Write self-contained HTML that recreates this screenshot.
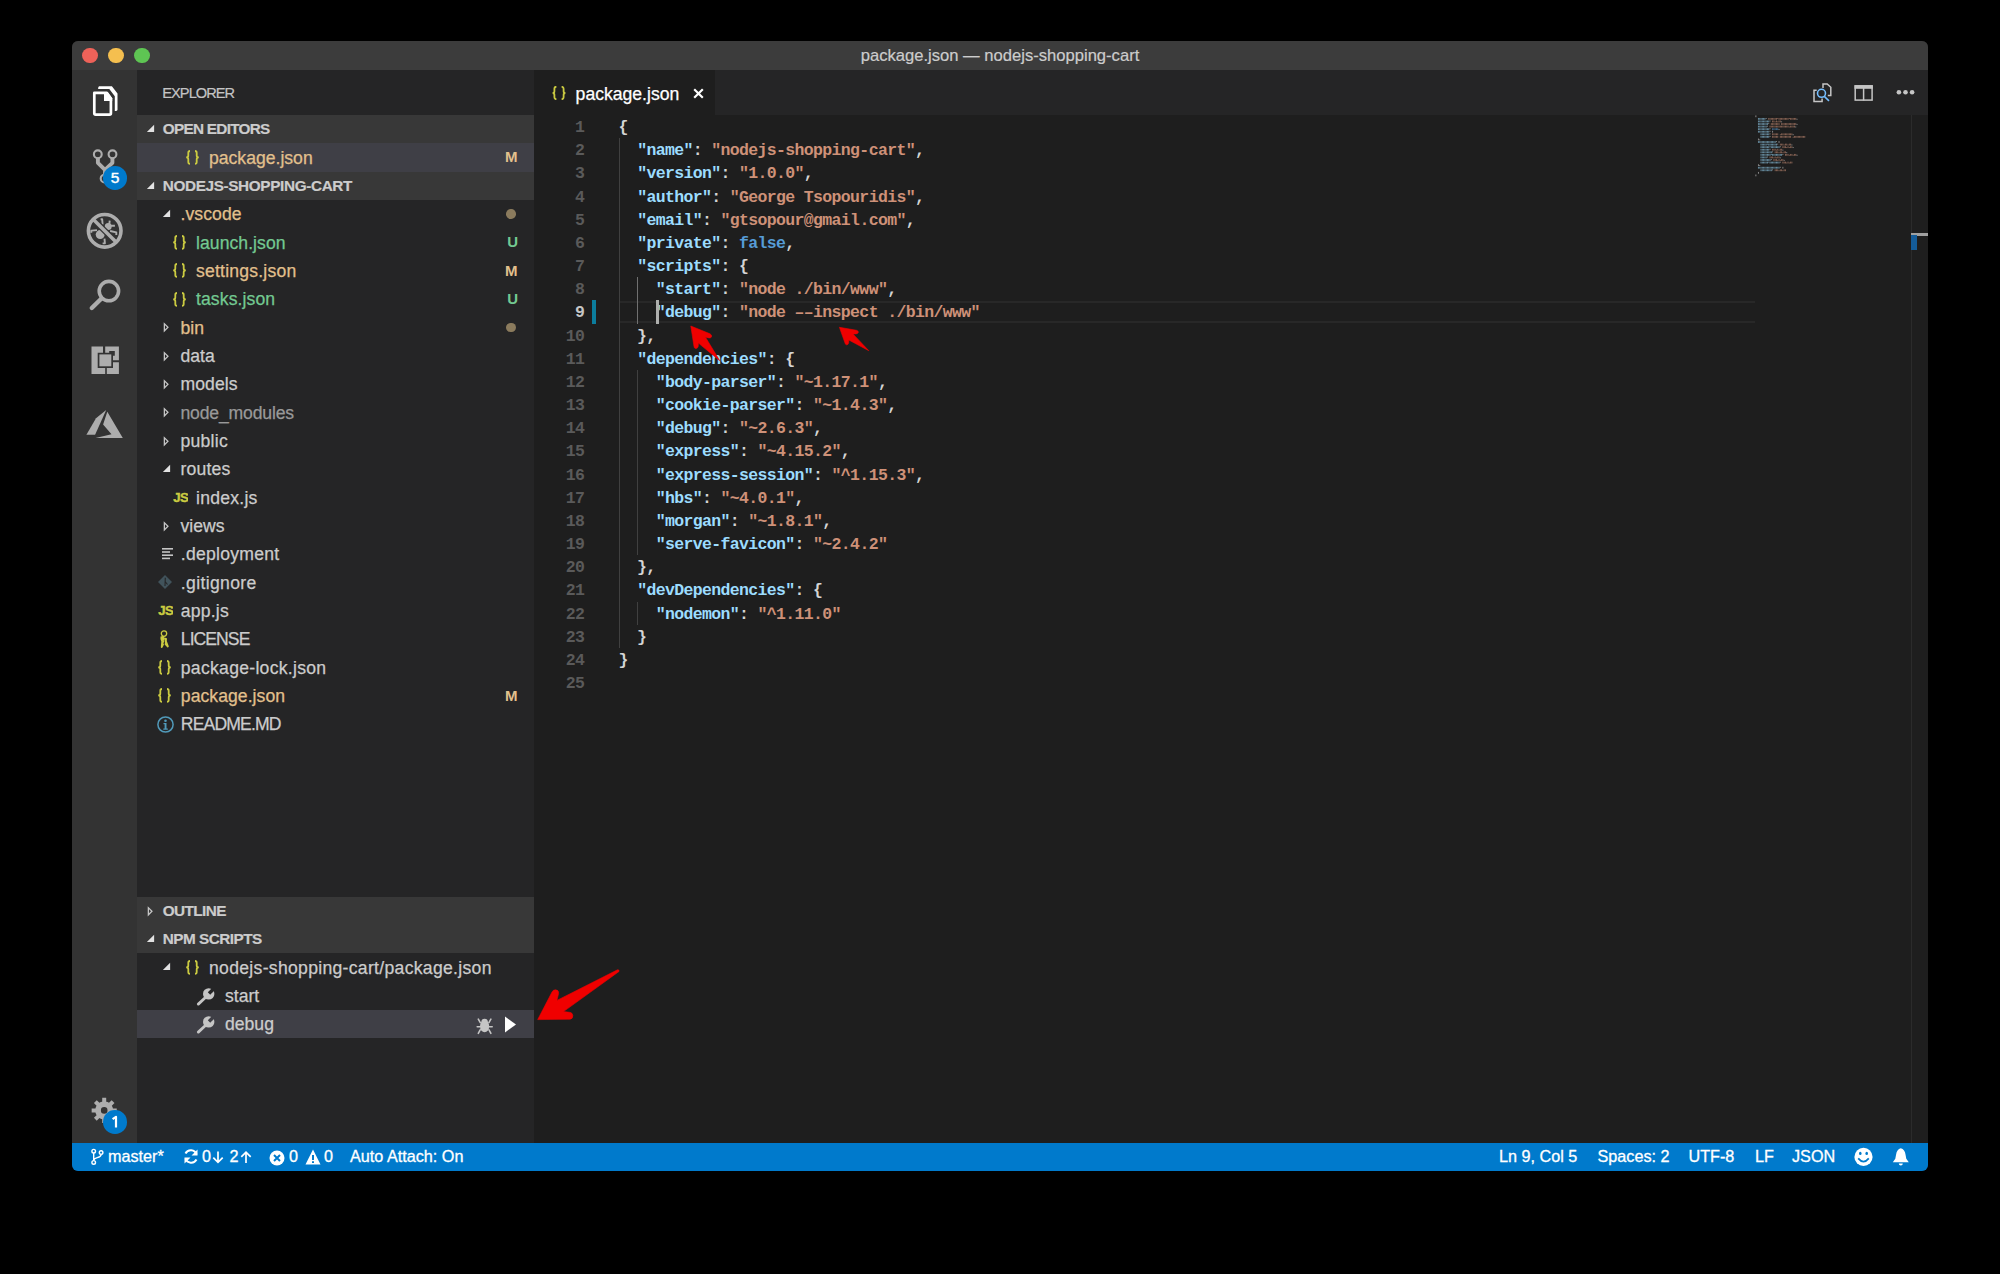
<!DOCTYPE html>
<html><head><meta charset="utf-8"><style>
html,body{margin:0;padding:0;background:#000;width:2000px;height:1274px;overflow:hidden;}
*{box-sizing:border-box;}
body{font-family:"Liberation Sans",sans-serif;position:relative;}
.a{position:absolute;}
.t{position:absolute;white-space:nowrap;}
#win{position:absolute;left:72px;top:41px;width:1856px;height:1130px;border-radius:6px;overflow:hidden;background:#1e1e1e;}
.tl{position:absolute;top:47.5px;width:15.8px;height:15.8px;border-radius:50%;}
.sh{position:absolute;left:137px;width:397px;height:28.3px;background:#383838;}
.sht{position:absolute;left:162.7px;font-weight:bold;font-size:15.3px;line-height:28.3px;color:#cccccc;white-space:nowrap;-webkit-text-stroke:0.2px #cccccc;}
.fn{position:absolute;font-size:17.6px;line-height:28.3px;white-space:nowrap;color:#cccccc;margin-top:0.3px;-webkit-text-stroke:0.25px currentColor;}
.br{position:absolute;font-size:15px;line-height:28.3px;color:#cbcb41;white-space:nowrap;letter-spacing:1px;}
.dec{position:absolute;font-size:15px;font-weight:bold;line-height:28.3px;white-space:nowrap;}
.code{font-family:"Liberation Mono",monospace;font-weight:bold;font-size:16.5px;letter-spacing:-0.642px;}
.ln{position:absolute;height:23.17px;line-height:23.17px;white-space:pre;}
.sb{position:absolute;top:1142px;height:28px;line-height:28px;font-size:16px;color:#fff;white-space:nowrap;-webkit-text-stroke:0.3px #fff;}
</style></head><body>
<div id="win"></div>
<div class="a" style="left:72px;top:41px;width:1856px;height:29px;background:#3c3c3c;border-radius:6px 6px 0 0;"></div>
<div class="t" style="left:72px;top:41px;width:1856px;height:29px;line-height:29px;text-align:center;color:#cccccc;font-size:16.6px;-webkit-text-stroke:0.2px #cccccc;">package.json — nodejs-shopping-cart</div>
<div class="tl" style="left:82.4px;background:#ee6259;"></div>
<div class="tl" style="left:108.3px;background:#f5bf4f;"></div>
<div class="tl" style="left:134px;background:#5ec553;"></div>
<div class="a" style="left:72px;top:70px;width:65px;height:1073px;background:#333333;"></div>
<div class="a" style="left:137px;top:70px;width:397px;height:1073px;background:#252526;"></div>
<div class="a" style="left:534px;top:70px;width:1394px;height:45px;background:#252526;"></div>
<div class="a" style="left:534px;top:70px;width:181px;height:45px;background:#1e1e1e;"></div>
<div class="a" style="left:72px;top:1143px;width:1856px;height:28px;background:#007acc;border-radius:0 0 6px 6px;"></div>
<svg class="a" style="left:80px;top:80px;width:50px;height:40px" viewBox="80 80 50 40"><path fill="none" stroke="#ffffff" stroke-width="2.7" stroke-linejoin="round" d="M94.3 92.9H106.8L110.9 98.6V113.3Q110.9 114.7 109.5 114.7H95.7Q94.3 114.7 94.3 113.3Z"/><path fill="#ffffff" d="M104 92H107.5L112.2 98.3V101.1H104Z"/><path fill="#ffffff" d="M99.2 86.2H111.9L117.5 93.6V109.8Q117.5 110.9 116.1 110.9H114.8V96.3L109.3 88.9H98.1Q98.1 86.2 99.2 86.2Z"/></svg>
<svg class="a" style="left:80px;top:140px;width:50px;height:50px" viewBox="80 140 50 50"><g fill="none" stroke="#adadad" stroke-width="2.1"><circle cx="97.8" cy="154.3" r="3.9"/><circle cx="112.5" cy="154.3" r="3.9"/><circle cx="104.6" cy="178.6" r="3.9"/></g><path fill="none" stroke="#adadad" stroke-width="3.9" stroke-linejoin="round" d="M97.9 157.5V162.8L105 169.8L112.4 162.8V157.5M105 169.5V175"/></svg>
<div class="a" style="left:103.15px;top:166.15px;width:23.7px;height:23.7px;border-radius:50%;background:#007acc;color:#fff;font-size:15.5px;line-height:23.7px;text-align:center;-webkit-text-stroke:0.4px #fff;">5</div>
<svg class="a" style="left:80px;top:205px;width:50px;height:50px" viewBox="80 205 50 50"><circle cx="104.7" cy="230.8" r="16.3" fill="none" stroke="#adadad" stroke-width="3.6"/><g fill="#adadad"><circle cx="100.2" cy="234.6" r="4.5"/><circle cx="108.2" cy="226.4" r="3.5"/></g><g fill="none" stroke="#adadad" stroke-width="1.9" stroke-linejoin="round"><path d="M91.3 232.8V230.6L97 230.1M104.5 238.6L104.9 243.4H102.6M100.6 219.3H102.2L102.6 224.5M109.7 220.7L109.3 224.5M110.6 225.7H114.9M110.1 231L116.3 232.4V235"/></g><path stroke="#333333" stroke-width="6" d="M95.6 221.7L113.8 239.9"/><path stroke="#adadad" stroke-width="3.5" d="M93.4 219.5L116 242.1"/></svg>
<svg class="a" style="left:80px;top:270px;width:50px;height:50px" viewBox="80 270 50 50"><circle cx="108.9" cy="291.1" r="9.7" fill="none" stroke="#adadad" stroke-width="3.6"/><path stroke="#adadad" stroke-width="4.4" stroke-linecap="round" d="M101.5 298.5L91.8 308"/></svg>
<svg class="a" style="left:80px;top:335px;width:50px;height:50px" viewBox="80 335 50 50"><path fill="#adadad" d="M91.5 346.5H103V352.7H97.7V368H105.2V373.9H91.5Z M105.2 346.5H118.9V360.2H113V355.7H114.8V351H109.2V352.7H105.2Z M113 362.3H118.9V373.9H106.8V368H113Z"/><rect x="99.4" y="354.4" width="11.9" height="11.9" fill="#adadad"/></svg>
<svg class="a" style="left:80px;top:400px;width:50px;height:50px" viewBox="80 400 50 50"><g fill="#adadad"><path d="M86.4 434.7L96 418.3L106.2 409.9L95.1 434.8Z"/><path d="M107.3 411.7L122.8 438.1H95.5L111.5 434.3L103.1 424.5Z"/></g></svg>
<svg class="a" style="left:80px;top:1090px;width:50px;height:45px" viewBox="80 1090 50 45"><path fill="#adadad" fill-rule="evenodd" d="M102.18 1101.63 L102.21 1097.86 L106.19 1097.86 L106.22 1101.63 L107.64 1102.09 L108.97 1102.77 L111.66 1100.13 L114.47 1102.94 L111.83 1105.63 L112.51 1106.96 L112.97 1108.38 L116.74 1108.41 L116.74 1112.39 L112.97 1112.42 L112.51 1113.84 L111.83 1115.17 L114.47 1117.86 L111.66 1120.67 L108.97 1118.03 L107.64 1118.71 L106.22 1119.17 L106.19 1122.94 L102.21 1122.94 L102.18 1119.17 L100.76 1118.71 L99.43 1118.03 L96.74 1120.67 L93.93 1117.86 L96.57 1115.17 L95.89 1113.84 L95.43 1112.42 L91.66 1112.39 L91.66 1108.41 L95.43 1108.38 L95.89 1106.96 L96.57 1105.63 L93.93 1102.94 L96.74 1100.13 L99.43 1102.77 L100.76 1102.09 Z M107.5 1110.4A3.3 3.3 0 1 0 100.9 1110.4A3.3 3.3 0 1 0 107.5 1110.4Z"/></svg>
<div class="a" style="left:103px;top:1110.2px;width:23.6px;height:23.6px;border-radius:50%;background:#007acc;"></div>
<svg class="a" style="left:110px;top:1114px;width:12px;height:16px" viewBox="0 0 12 16"><path fill="none" stroke="#fff" stroke-width="2.2" stroke-linejoin="round" d="M6 13.6V2.8L2.6 5.2"/></svg>
<div class="t" style="left:162.3px;top:70.6px;height:45px;line-height:45px;font-size:14.6px;letter-spacing:-0.95px;color:#c4c4c4;-webkit-text-stroke:0.2px #c4c4c4;">EXPLORER</div>
<div class="sh" style="top:115.00px"></div>
<svg class="a" style="left:139.5px;top:118.9px;width:20.57px;height:20.57px" viewBox="0 0 16 16"><path fill="#e2e2e2" d="M11 10.07H5.344L11 4.414v5.656z"/></svg>
<div class="sht" style="top:115.00px;letter-spacing:-0.70px">OPEN EDITORS</div>
<div class="a" style="left:137px;top:143.34px;width:397px;height:28.34px;background:#3f3f46;"></div>
<svg class="a" style="left:184.9px;top:149.9px;width:15px;height:15px" viewBox="0 0 15 15"><path fill="none" stroke="#cbcb41" stroke-width="1.8" d="M5 1C3.8 1 3.3 1.6 3.3 2.8V5.6C3.3 6.6 2.6 7.4 1.2 7.4C2.6 7.4 3.3 8.2 3.3 9.2V12C3.3 13.2 3.8 13.8 5 13.8M10 1C11.2 1 11.7 1.6 11.7 2.8V5.6C11.7 6.6 12.4 7.4 13.8 7.4C12.4 7.4 11.7 8.2 11.7 9.2V12C11.7 13.2 11.2 13.8 10 13.8"/></svg>
<div class="fn" style="left:209px;top:143.34px;color:#e2c08d">package.json</div>
<div class="dec" style="left:505px;top:143.34px;color:#e2c08d">M</div>
<div class="sh" style="top:171.68px"></div>
<svg class="a" style="left:139.5px;top:175.6px;width:20.57px;height:20.57px" viewBox="0 0 16 16"><path fill="#e2e2e2" d="M11 10.07H5.344L11 4.414v5.656z"/></svg>
<div class="sht" style="top:171.68px;letter-spacing:-0.35px">NODEJS-SHOPPING-CART</div>
<svg class="a" style="left:156.2px;top:203.9px;width:20.57px;height:20.57px" viewBox="0 0 16 16"><path fill="#e2e2e2" d="M11 10.07H5.344L11 4.414v5.656z"/></svg>
<div class="fn" style="left:180.4px;top:200.02px;color:#e2c08d;letter-spacing:0.10px">.vscode</div>
<div class="a" style="left:506px;top:209.19px;width:9.5px;height:9.5px;border-radius:50%;background:#8b7b5d;"></div>
<svg class="a" style="left:172.2px;top:234.9px;width:15px;height:15px" viewBox="0 0 15 15"><path fill="none" stroke="#cbcb41" stroke-width="1.8" d="M5 1C3.8 1 3.3 1.6 3.3 2.8V5.6C3.3 6.6 2.6 7.4 1.2 7.4C2.6 7.4 3.3 8.2 3.3 9.2V12C3.3 13.2 3.8 13.8 5 13.8M10 1C11.2 1 11.7 1.6 11.7 2.8V5.6C11.7 6.6 12.4 7.4 13.8 7.4C12.4 7.4 11.7 8.2 11.7 9.2V12C11.7 13.2 11.2 13.8 10 13.8"/></svg>
<div class="fn" style="left:196.0px;top:228.36px;color:#73c991;letter-spacing:0.05px">launch.json</div>
<div class="dec" style="left:507.3px;top:228.36px;color:#73c991">U</div>
<svg class="a" style="left:172.2px;top:263.3px;width:15px;height:15px" viewBox="0 0 15 15"><path fill="none" stroke="#cbcb41" stroke-width="1.8" d="M5 1C3.8 1 3.3 1.6 3.3 2.8V5.6C3.3 6.6 2.6 7.4 1.2 7.4C2.6 7.4 3.3 8.2 3.3 9.2V12C3.3 13.2 3.8 13.8 5 13.8M10 1C11.2 1 11.7 1.6 11.7 2.8V5.6C11.7 6.6 12.4 7.4 13.8 7.4C12.4 7.4 11.7 8.2 11.7 9.2V12C11.7 13.2 11.2 13.8 10 13.8"/></svg>
<div class="fn" style="left:196.0px;top:256.70px;color:#e2c08d;letter-spacing:0.20px">settings.json</div>
<div class="dec" style="left:505.0px;top:256.70px;color:#e2c08d">M</div>
<svg class="a" style="left:172.2px;top:291.6px;width:15px;height:15px" viewBox="0 0 15 15"><path fill="none" stroke="#cbcb41" stroke-width="1.8" d="M5 1C3.8 1 3.3 1.6 3.3 2.8V5.6C3.3 6.6 2.6 7.4 1.2 7.4C2.6 7.4 3.3 8.2 3.3 9.2V12C3.3 13.2 3.8 13.8 5 13.8M10 1C11.2 1 11.7 1.6 11.7 2.8V5.6C11.7 6.6 12.4 7.4 13.8 7.4C12.4 7.4 11.7 8.2 11.7 9.2V12C11.7 13.2 11.2 13.8 10 13.8"/></svg>
<div class="fn" style="left:196.0px;top:285.04px;color:#73c991;letter-spacing:0.10px">tasks.json</div>
<div class="dec" style="left:507.3px;top:285.04px;color:#73c991">U</div>
<svg class="a" style="left:156.2px;top:317.3px;width:20.57px;height:20.57px" viewBox="0 0 16 16"><path fill="#c5c5c5" d="M6 4v8l4-4-4-4zm1 2.414L8.586 8 7 9.586V6.414z"/></svg>
<div class="fn" style="left:180.4px;top:313.38px;color:#e2c08d;letter-spacing:0.05px">bin</div>
<div class="a" style="left:506px;top:322.55px;width:9.5px;height:9.5px;border-radius:50%;background:#8b7b5d;"></div>
<svg class="a" style="left:156.2px;top:345.6px;width:20.57px;height:20.57px" viewBox="0 0 16 16"><path fill="#c5c5c5" d="M6 4v8l4-4-4-4zm1 2.414L8.586 8 7 9.586V6.414z"/></svg>
<div class="fn" style="left:180.4px;top:341.72px;color:#cccccc;letter-spacing:0.05px">data</div>
<svg class="a" style="left:156.2px;top:373.9px;width:20.57px;height:20.57px" viewBox="0 0 16 16"><path fill="#c5c5c5" d="M6 4v8l4-4-4-4zm1 2.414L8.586 8 7 9.586V6.414z"/></svg>
<div class="fn" style="left:180.4px;top:370.06px;color:#cccccc;letter-spacing:0.10px">models</div>
<svg class="a" style="left:156.2px;top:402.3px;width:20.57px;height:20.57px" viewBox="0 0 16 16"><path fill="#c5c5c5" d="M6 4v8l4-4-4-4zm1 2.414L8.586 8 7 9.586V6.414z"/></svg>
<div class="fn" style="left:180.4px;top:398.40px;color:#999999;letter-spacing:-0.15px">node_modules</div>
<svg class="a" style="left:156.2px;top:430.6px;width:20.57px;height:20.57px" viewBox="0 0 16 16"><path fill="#c5c5c5" d="M6 4v8l4-4-4-4zm1 2.414L8.586 8 7 9.586V6.414z"/></svg>
<div class="fn" style="left:180.4px;top:426.74px;color:#cccccc;letter-spacing:0.27px">public</div>
<svg class="a" style="left:156.2px;top:459.0px;width:20.57px;height:20.57px" viewBox="0 0 16 16"><path fill="#e2e2e2" d="M11 10.07H5.344L11 4.414v5.656z"/></svg>
<div class="fn" style="left:180.4px;top:455.08px;color:#cccccc;letter-spacing:0.20px">routes</div>
<svg class="a" style="left:173.1px;top:490.9px;width:15px;height:12px" viewBox="0 0 15 12"><text x="0.3" y="10.6" font-family="Liberation Sans" font-weight="bold" font-size="13.2" fill="#cbcb41" stroke="#cbcb41" stroke-width="0.4" letter-spacing="-0.6">JS</text></svg>
<div class="fn" style="left:196.0px;top:483.42px;color:#cccccc;letter-spacing:0.24px">index.js</div>
<svg class="a" style="left:156.2px;top:515.6px;width:20.57px;height:20.57px" viewBox="0 0 16 16"><path fill="#c5c5c5" d="M6 4v8l4-4-4-4zm1 2.414L8.586 8 7 9.586V6.414z"/></svg>
<div class="fn" style="left:180.4px;top:511.76px;color:#cccccc;letter-spacing:0.05px">views</div>
<svg class="a" style="left:161.8px;top:548.0px;width:12px;height:12px" viewBox="0 0 12 12"><g fill="#c5c5c5"><rect x="0" y="0" width="11" height="1.6"/><rect x="0" y="3.2" width="8" height="1.6"/><rect x="0" y="6.4" width="11" height="1.6"/><rect x="0" y="9.6" width="8" height="1.6"/></g></svg>
<div class="fn" style="left:180.8px;top:540.10px;color:#cccccc;letter-spacing:0.25px">.deployment</div>
<svg class="a" style="left:157.7px;top:575.2px;width:14px;height:14px" viewBox="0 0 14 14"><path fill="#41535b" d="M7 0L14 7 7 14 0 7z"/><path stroke="#252526" stroke-width="1.1" fill="none" d="M7.3 2.8L7 11M7.1 6.5L9.5 9.5"/></svg>
<div class="fn" style="left:180.8px;top:568.44px;color:#cccccc;letter-spacing:0.35px">.gitignore</div>
<svg class="a" style="left:157.8px;top:604.2px;width:15px;height:12px" viewBox="0 0 15 12"><text x="0.3" y="10.6" font-family="Liberation Sans" font-weight="bold" font-size="13.2" fill="#cbcb41" stroke="#cbcb41" stroke-width="0.4" letter-spacing="-0.6">JS</text></svg>
<div class="fn" style="left:180.8px;top:596.78px;color:#cccccc;letter-spacing:0.20px">app.js</div>
<svg class="a" style="left:157.0px;top:629.8px;width:14px;height:20px" viewBox="0 0 14 20"><g fill="none" stroke="#cbcb41" stroke-width="1.3"><circle cx="7" cy="3.6" r="2.7"/></g><g fill="#cbcb41"><path d="M3.5 6.6Q5.5 5.4 7.5 6.6L7.2 9.5 6.8 10.5 7.3 12 6.3 13 7 14.5 5.5 17.5Q4.3 18.6 3.8 17.3L4.3 11.5Q3 9 3.5 6.6Z"/><path d="M7 8Q8.8 7.2 10 8.5L9.8 11 11.8 16.3Q11.8 17.6 10.5 17.4L7.6 14.5 8 12.5z"/></g></svg>
<div class="fn" style="left:180.8px;top:625.12px;color:#cccccc;letter-spacing:-0.95px">LICENSE</div>
<svg class="a" style="left:156.9px;top:660.0px;width:15px;height:15px" viewBox="0 0 15 15"><path fill="none" stroke="#cbcb41" stroke-width="1.8" d="M5 1C3.8 1 3.3 1.6 3.3 2.8V5.6C3.3 6.6 2.6 7.4 1.2 7.4C2.6 7.4 3.3 8.2 3.3 9.2V12C3.3 13.2 3.8 13.8 5 13.8M10 1C11.2 1 11.7 1.6 11.7 2.8V5.6C11.7 6.6 12.4 7.4 13.8 7.4C12.4 7.4 11.7 8.2 11.7 9.2V12C11.7 13.2 11.2 13.8 10 13.8"/></svg>
<div class="fn" style="left:180.8px;top:653.46px;color:#cccccc;letter-spacing:0.28px">package-lock.json</div>
<svg class="a" style="left:156.9px;top:688.4px;width:15px;height:15px" viewBox="0 0 15 15"><path fill="none" stroke="#cbcb41" stroke-width="1.8" d="M5 1C3.8 1 3.3 1.6 3.3 2.8V5.6C3.3 6.6 2.6 7.4 1.2 7.4C2.6 7.4 3.3 8.2 3.3 9.2V12C3.3 13.2 3.8 13.8 5 13.8M10 1C11.2 1 11.7 1.6 11.7 2.8V5.6C11.7 6.6 12.4 7.4 13.8 7.4C12.4 7.4 11.7 8.2 11.7 9.2V12C11.7 13.2 11.2 13.8 10 13.8"/></svg>
<div class="fn" style="left:180.8px;top:681.80px;color:#e2c08d;letter-spacing:0.05px">package.json</div>
<div class="dec" style="left:505.0px;top:681.80px;color:#e2c08d">M</div>
<svg class="a" style="left:156.6px;top:716.0px;width:17px;height:17px" viewBox="0 0 17 17"><circle cx="8.5" cy="8.5" r="7.6" fill="none" stroke="#519aba" stroke-width="1.5"/><circle cx="8.5" cy="4.8" r="1.3" fill="#519aba"/><path fill="#519aba" d="M6.5 7h3v5.5h1.3v1.3H6.3v-1.3h1.3V8.3H6.5z"/></svg>
<div class="fn" style="left:180.8px;top:710.14px;color:#cccccc;letter-spacing:-0.85px">README.MD</div>
<div class="sh" style="top:896.70px"></div>
<svg class="a" style="left:139.5px;top:900.6px;width:20.57px;height:20.57px" viewBox="0 0 16 16"><path fill="#c5c5c5" d="M6 4v8l4-4-4-4zm1 2.414L8.586 8 7 9.586V6.414z"/></svg>
<div class="sht" style="top:896.70px;letter-spacing:-0.55px">OUTLINE</div>
<div class="sh" style="top:925.04px"></div>
<svg class="a" style="left:139.5px;top:928.9px;width:20.57px;height:20.57px" viewBox="0 0 16 16"><path fill="#e2e2e2" d="M11 10.07H5.344L11 4.414v5.656z"/></svg>
<div class="sht" style="top:925.04px;letter-spacing:-0.49px">NPM SCRIPTS</div>
<svg class="a" style="left:156.2px;top:957.3px;width:20.57px;height:20.57px" viewBox="0 0 16 16"><path fill="#e2e2e2" d="M11 10.07H5.344L11 4.414v5.656z"/></svg>
<svg class="a" style="left:184.9px;top:959.9px;width:15px;height:15px" viewBox="0 0 15 15"><path fill="none" stroke="#cbcb41" stroke-width="1.8" d="M5 1C3.8 1 3.3 1.6 3.3 2.8V5.6C3.3 6.6 2.6 7.4 1.2 7.4C2.6 7.4 3.3 8.2 3.3 9.2V12C3.3 13.2 3.8 13.8 5 13.8M10 1C11.2 1 11.7 1.6 11.7 2.8V5.6C11.7 6.6 12.4 7.4 13.8 7.4C12.4 7.4 11.7 8.2 11.7 9.2V12C11.7 13.2 11.2 13.8 10 13.8"/></svg>
<div class="fn" style="left:209px;top:953.38px;letter-spacing:0.3px">nodejs-shopping-cart/package.json</div>
<svg class="a" style="left:196.2px;top:986.7px;width:20px;height:20px" viewBox="0 0 20 20"><defs><mask id="wm0"><rect width="20" height="20" fill="#fff"/><rect x="11.3" y="-1" width="3.4" height="7.5" fill="#000" transform="rotate(45 13 6.5)"/></mask></defs><g fill="#c5c5c5" mask="url(#wm0)"><circle cx="12.7" cy="6.9" r="5.7"/></g><path stroke="#c5c5c5" stroke-width="2.8" stroke-linecap="round" d="M10.5 9.5L2.3 17.1"/></svg>
<div class="fn" style="left:225px;top:981.72px;">start</div>
<div class="a" style="left:137px;top:1010.06px;width:397px;height:28.34px;background:#3f3f46;"></div>
<svg class="a" style="left:196.2px;top:1015.0px;width:20px;height:20px" viewBox="0 0 20 20"><defs><mask id="wm1"><rect width="20" height="20" fill="#fff"/><rect x="11.3" y="-1" width="3.4" height="7.5" fill="#000" transform="rotate(45 13 6.5)"/></mask></defs><g fill="#c5c5c5" mask="url(#wm1)"><circle cx="12.7" cy="6.9" r="5.7"/></g><path stroke="#c5c5c5" stroke-width="2.8" stroke-linecap="round" d="M10.5 9.5L2.3 17.1"/></svg>
<div class="fn" style="left:225px;top:1010.06px;">debug</div>
<svg class="a" style="left:470px;top:1010.7px;width:30px;height:30px" viewBox="470 1009 30 30"><g fill="#c5c5c5"><ellipse cx="484.6" cy="1024.2" rx="4.6" ry="6"/><ellipse cx="484.6" cy="1019.8" rx="3.2" ry="3"/></g><g fill="none" stroke="#c5c5c5" stroke-width="1.6" stroke-linecap="round"><path d="M480.3 1020.6L478.3 1017.2M488.9 1020.6L490.9 1017.2M480 1024.8H477.2M489.2 1024.8H492.2M480.2 1027.8L478.3 1031.4M489 1027.8L490.9 1031.4"/></g></svg>
<svg class="a" style="left:504px;top:1016.1px;width:13px;height:17px" viewBox="0 0 13 17"><path fill="#ffffff" d="M1 0.5L12 8.5 1 16.5z"/></svg>
<svg class="a" style="left:552.2px;top:86.3px;width:14px;height:14px" viewBox="0 0 14 14"><path fill="none" stroke="#cbcb41" stroke-width="1.8" d="M4.4 0.8C3 0.8 2.4 1.4 2.4 2.7V5.2C2.4 6.2 1.8 7 0.6 7C1.8 7 2.4 7.8 2.4 8.8V11.3C2.4 12.6 3 13.2 4.4 13.2M9.6 0.8C11 0.8 11.6 1.4 11.6 2.7V5.2C11.6 6.2 12.2 7 13.4 7C12.2 7 11.6 7.8 11.6 8.8V11.3C11.6 12.6 11 13.2 9.6 13.2"/></svg>
<div class="t" style="left:575.6px;top:71.6px;height:45px;line-height:45px;font-size:17.6px;color:#ffffff;-webkit-text-stroke:0.25px #fff;">package.json</div>
<svg class="a" style="left:693px;top:87.5px;width:11px;height:11px" viewBox="0 0 11 11"><path stroke="#ffffff" stroke-width="2.2" d="M1.2 1.2L9.8 9.8M9.8 1.2L1.2 9.8"/></svg>
<svg class="a" style="left:1805px;top:78px;width:120px;height:30px" viewBox="1805 78 120 30"><g fill="none" stroke="#c5c5c5" stroke-width="1.5"><path d="M1823 88V84H1827.2L1830.8 87.3V95.4H1827.8"/><path d="M1816.7 90.3H1814V101.4H1822.1V98.4"/><rect x="1855.2" y="85.9" width="16.9" height="14.2"/><path d="M1863.6 88V100.5"/></g><rect x="1854.5" y="85.2" width="18.3" height="3.6" fill="#c5c5c5"/><g fill="none" stroke="#75beff" stroke-width="1.6"><circle cx="1821.5" cy="93.3" r="4"/><path d="M1824.3 96.3L1829 100.8"/></g><g fill="#c5c5c5"><circle cx="1898.9" cy="92.3" r="2.3"/><circle cx="1905.5" cy="92.3" r="2.3"/><circle cx="1912.1" cy="92.3" r="2.3"/></g></svg>
<div class="a" style="left:619.5px;top:300.96px;width:1135.7px;height:21.97px;border-top:2px solid #282828;border-bottom:2px solid #282828;"></div>
<div class="a" style="left:618.60px;top:138.17px;width:1.3px;height:509.74px;background:#404040;"></div>
<div class="a" style="left:637.12px;top:277.19px;width:1.3px;height:46.34px;background:#707070;"></div>
<div class="a" style="left:637.12px;top:369.87px;width:1.3px;height:185.36px;background:#404040;"></div>
<div class="a" style="left:637.12px;top:601.57px;width:1.3px;height:23.17px;background:#404040;"></div>
<div class="a" style="left:591.6px;top:300.36px;width:4.2px;height:23.17px;background:#0c7d9d;"></div>
<div class="ln code" style="left:540px;width:44.2px;text-align:right;top:116.00px;color:#5a5a5a">1</div>
<div class="ln code" style="left:540px;width:44.2px;text-align:right;top:139.17px;color:#5a5a5a">2</div>
<div class="ln code" style="left:540px;width:44.2px;text-align:right;top:162.34px;color:#5a5a5a">3</div>
<div class="ln code" style="left:540px;width:44.2px;text-align:right;top:185.51px;color:#5a5a5a">4</div>
<div class="ln code" style="left:540px;width:44.2px;text-align:right;top:208.68px;color:#5a5a5a">5</div>
<div class="ln code" style="left:540px;width:44.2px;text-align:right;top:231.85px;color:#5a5a5a">6</div>
<div class="ln code" style="left:540px;width:44.2px;text-align:right;top:255.02px;color:#5a5a5a">7</div>
<div class="ln code" style="left:540px;width:44.2px;text-align:right;top:278.19px;color:#5a5a5a">8</div>
<div class="ln code" style="left:540px;width:44.2px;text-align:right;top:301.36px;color:#c6c6c6">9</div>
<div class="ln code" style="left:540px;width:44.2px;text-align:right;top:324.53px;color:#5a5a5a">10</div>
<div class="ln code" style="left:540px;width:44.2px;text-align:right;top:347.70px;color:#5a5a5a">11</div>
<div class="ln code" style="left:540px;width:44.2px;text-align:right;top:370.87px;color:#5a5a5a">12</div>
<div class="ln code" style="left:540px;width:44.2px;text-align:right;top:394.04px;color:#5a5a5a">13</div>
<div class="ln code" style="left:540px;width:44.2px;text-align:right;top:417.21px;color:#5a5a5a">14</div>
<div class="ln code" style="left:540px;width:44.2px;text-align:right;top:440.38px;color:#5a5a5a">15</div>
<div class="ln code" style="left:540px;width:44.2px;text-align:right;top:463.55px;color:#5a5a5a">16</div>
<div class="ln code" style="left:540px;width:44.2px;text-align:right;top:486.72px;color:#5a5a5a">17</div>
<div class="ln code" style="left:540px;width:44.2px;text-align:right;top:509.89px;color:#5a5a5a">18</div>
<div class="ln code" style="left:540px;width:44.2px;text-align:right;top:533.06px;color:#5a5a5a">19</div>
<div class="ln code" style="left:540px;width:44.2px;text-align:right;top:556.23px;color:#5a5a5a">20</div>
<div class="ln code" style="left:540px;width:44.2px;text-align:right;top:579.40px;color:#5a5a5a">21</div>
<div class="ln code" style="left:540px;width:44.2px;text-align:right;top:602.57px;color:#5a5a5a">22</div>
<div class="ln code" style="left:540px;width:44.2px;text-align:right;top:625.74px;color:#5a5a5a">23</div>
<div class="ln code" style="left:540px;width:44.2px;text-align:right;top:648.91px;color:#5a5a5a">24</div>
<div class="ln code" style="left:540px;width:44.2px;text-align:right;top:672.08px;color:#5a5a5a">25</div>
<div class="ln code" style="left:618.60px;top:116.00px;"><span style="color:#d4d4d4">{</span></div>
<div class="ln code" style="left:618.60px;top:139.17px;"><span style="color:#d4d4d4">  </span><span style="color:#9cdcfe">"name"</span><span style="color:#d4d4d4">: </span><span style="color:#ce9178">"nodejs-shopping-cart"</span><span style="color:#d4d4d4">,</span></div>
<div class="ln code" style="left:618.60px;top:162.34px;"><span style="color:#d4d4d4">  </span><span style="color:#9cdcfe">"version"</span><span style="color:#d4d4d4">: </span><span style="color:#ce9178">"1.0.0"</span><span style="color:#d4d4d4">,</span></div>
<div class="ln code" style="left:618.60px;top:185.51px;"><span style="color:#d4d4d4">  </span><span style="color:#9cdcfe">"author"</span><span style="color:#d4d4d4">: </span><span style="color:#ce9178">"George Tsopouridis"</span><span style="color:#d4d4d4">,</span></div>
<div class="ln code" style="left:618.60px;top:208.68px;"><span style="color:#d4d4d4">  </span><span style="color:#9cdcfe">"email"</span><span style="color:#d4d4d4">: </span><span style="color:#ce9178">"gtsopour@gmail.com"</span><span style="color:#d4d4d4">,</span></div>
<div class="ln code" style="left:618.60px;top:231.85px;"><span style="color:#d4d4d4">  </span><span style="color:#9cdcfe">"private"</span><span style="color:#d4d4d4">: </span><span style="color:#569cd6">false</span><span style="color:#d4d4d4">,</span></div>
<div class="ln code" style="left:618.60px;top:255.02px;"><span style="color:#d4d4d4">  </span><span style="color:#9cdcfe">"scripts"</span><span style="color:#d4d4d4">: {</span></div>
<div class="ln code" style="left:618.60px;top:278.19px;"><span style="color:#d4d4d4">    </span><span style="color:#9cdcfe">"start"</span><span style="color:#d4d4d4">: </span><span style="color:#ce9178">"node ./bin/www"</span><span style="color:#d4d4d4">,</span></div>
<div class="ln code" style="left:618.60px;top:301.36px;"><span style="color:#d4d4d4">    </span><span style="color:#9cdcfe">"debug"</span><span style="color:#d4d4d4">: </span><span style="color:#ce9178">"node ––inspect ./bin/www"</span></div>
<div class="ln code" style="left:618.60px;top:324.53px;"><span style="color:#d4d4d4">  },</span></div>
<div class="ln code" style="left:618.60px;top:347.70px;"><span style="color:#d4d4d4">  </span><span style="color:#9cdcfe">"dependencies"</span><span style="color:#d4d4d4">: {</span></div>
<div class="ln code" style="left:618.60px;top:370.87px;"><span style="color:#d4d4d4">    </span><span style="color:#9cdcfe">"body-parser"</span><span style="color:#d4d4d4">: </span><span style="color:#ce9178">"~1.17.1"</span><span style="color:#d4d4d4">,</span></div>
<div class="ln code" style="left:618.60px;top:394.04px;"><span style="color:#d4d4d4">    </span><span style="color:#9cdcfe">"cookie-parser"</span><span style="color:#d4d4d4">: </span><span style="color:#ce9178">"~1.4.3"</span><span style="color:#d4d4d4">,</span></div>
<div class="ln code" style="left:618.60px;top:417.21px;"><span style="color:#d4d4d4">    </span><span style="color:#9cdcfe">"debug"</span><span style="color:#d4d4d4">: </span><span style="color:#ce9178">"~2.6.3"</span><span style="color:#d4d4d4">,</span></div>
<div class="ln code" style="left:618.60px;top:440.38px;"><span style="color:#d4d4d4">    </span><span style="color:#9cdcfe">"express"</span><span style="color:#d4d4d4">: </span><span style="color:#ce9178">"~4.15.2"</span><span style="color:#d4d4d4">,</span></div>
<div class="ln code" style="left:618.60px;top:463.55px;"><span style="color:#d4d4d4">    </span><span style="color:#9cdcfe">"express-session"</span><span style="color:#d4d4d4">: </span><span style="color:#ce9178">"^1.15.3"</span><span style="color:#d4d4d4">,</span></div>
<div class="ln code" style="left:618.60px;top:486.72px;"><span style="color:#d4d4d4">    </span><span style="color:#9cdcfe">"hbs"</span><span style="color:#d4d4d4">: </span><span style="color:#ce9178">"~4.0.1"</span><span style="color:#d4d4d4">,</span></div>
<div class="ln code" style="left:618.60px;top:509.89px;"><span style="color:#d4d4d4">    </span><span style="color:#9cdcfe">"morgan"</span><span style="color:#d4d4d4">: </span><span style="color:#ce9178">"~1.8.1"</span><span style="color:#d4d4d4">,</span></div>
<div class="ln code" style="left:618.60px;top:533.06px;"><span style="color:#d4d4d4">    </span><span style="color:#9cdcfe">"serve-favicon"</span><span style="color:#d4d4d4">: </span><span style="color:#ce9178">"~2.4.2"</span></div>
<div class="ln code" style="left:618.60px;top:556.23px;"><span style="color:#d4d4d4">  },</span></div>
<div class="ln code" style="left:618.60px;top:579.40px;"><span style="color:#d4d4d4">  </span><span style="color:#9cdcfe">"devDependencies"</span><span style="color:#d4d4d4">: {</span></div>
<div class="ln code" style="left:618.60px;top:602.57px;"><span style="color:#d4d4d4">    </span><span style="color:#9cdcfe">"nodemon"</span><span style="color:#d4d4d4">: </span><span style="color:#ce9178">"^1.11.0"</span></div>
<div class="ln code" style="left:618.60px;top:625.74px;"><span style="color:#d4d4d4">  }</span></div>
<div class="ln code" style="left:618.60px;top:648.91px;"><span style="color:#d4d4d4">}</span></div>
<div class="a" style="left:656.2px;top:300.36px;width:2.6px;height:23.17px;background:#aeafad;"></div>
<svg class="a" style="left:0;top:0;width:2000px;height:300px;opacity:0.6" viewBox="0 0 2000 300"><rect x="1755.40" y="115.40" width="0.95" height="1.8" fill="#d4d4d4"/><rect x="1757.97" y="117.97" width="0.95" height="1.8" fill="#9cdcfe"/><rect x="1759.26" y="117.97" width="0.95" height="1.8" fill="#9cdcfe"/><rect x="1760.54" y="117.97" width="0.95" height="1.8" fill="#9cdcfe"/><rect x="1761.83" y="117.97" width="0.95" height="1.8" fill="#9cdcfe"/><rect x="1763.12" y="117.97" width="0.95" height="1.8" fill="#9cdcfe"/><rect x="1764.40" y="117.97" width="0.95" height="1.8" fill="#9cdcfe"/><rect x="1765.69" y="117.97" width="0.95" height="1.0" fill="#d4d4d4"/><rect x="1768.26" y="117.97" width="0.95" height="1.8" fill="#ce9178"/><rect x="1769.55" y="117.97" width="0.95" height="1.8" fill="#ce9178"/><rect x="1770.83" y="117.97" width="0.95" height="1.8" fill="#ce9178"/><rect x="1772.12" y="117.97" width="0.95" height="1.8" fill="#ce9178"/><rect x="1773.40" y="117.97" width="0.95" height="1.8" fill="#ce9178"/><rect x="1774.69" y="117.97" width="0.95" height="1.8" fill="#ce9178"/><rect x="1775.98" y="117.97" width="0.95" height="1.8" fill="#ce9178"/><rect x="1777.26" y="117.97" width="0.95" height="1.0" fill="#ce9178"/><rect x="1778.55" y="117.97" width="0.95" height="1.8" fill="#ce9178"/><rect x="1779.83" y="117.97" width="0.95" height="1.8" fill="#ce9178"/><rect x="1781.12" y="117.97" width="0.95" height="1.8" fill="#ce9178"/><rect x="1782.41" y="117.97" width="0.95" height="1.8" fill="#ce9178"/><rect x="1783.69" y="117.97" width="0.95" height="1.8" fill="#ce9178"/><rect x="1784.98" y="117.97" width="0.95" height="1.8" fill="#ce9178"/><rect x="1786.26" y="117.97" width="0.95" height="1.8" fill="#ce9178"/><rect x="1787.55" y="117.97" width="0.95" height="1.8" fill="#ce9178"/><rect x="1788.84" y="117.97" width="0.95" height="1.0" fill="#ce9178"/><rect x="1790.12" y="117.97" width="0.95" height="1.8" fill="#ce9178"/><rect x="1791.41" y="117.97" width="0.95" height="1.8" fill="#ce9178"/><rect x="1792.69" y="117.97" width="0.95" height="1.8" fill="#ce9178"/><rect x="1793.98" y="117.97" width="0.95" height="1.8" fill="#ce9178"/><rect x="1795.27" y="117.97" width="0.95" height="1.8" fill="#ce9178"/><rect x="1796.55" y="118.77" width="0.95" height="1.0" fill="#d4d4d4"/><rect x="1757.97" y="120.54" width="0.95" height="1.8" fill="#9cdcfe"/><rect x="1759.26" y="120.54" width="0.95" height="1.8" fill="#9cdcfe"/><rect x="1760.54" y="120.54" width="0.95" height="1.8" fill="#9cdcfe"/><rect x="1761.83" y="120.54" width="0.95" height="1.8" fill="#9cdcfe"/><rect x="1763.12" y="120.54" width="0.95" height="1.8" fill="#9cdcfe"/><rect x="1764.40" y="120.54" width="0.95" height="1.8" fill="#9cdcfe"/><rect x="1765.69" y="120.54" width="0.95" height="1.8" fill="#9cdcfe"/><rect x="1766.97" y="120.54" width="0.95" height="1.8" fill="#9cdcfe"/><rect x="1768.26" y="120.54" width="0.95" height="1.8" fill="#9cdcfe"/><rect x="1769.55" y="120.54" width="0.95" height="1.0" fill="#d4d4d4"/><rect x="1772.12" y="120.54" width="0.95" height="1.8" fill="#ce9178"/><rect x="1773.40" y="120.54" width="0.95" height="1.8" fill="#ce9178"/><rect x="1774.69" y="121.34" width="0.95" height="1.0" fill="#ce9178"/><rect x="1775.98" y="120.54" width="0.95" height="1.8" fill="#ce9178"/><rect x="1777.26" y="121.34" width="0.95" height="1.0" fill="#ce9178"/><rect x="1778.55" y="120.54" width="0.95" height="1.8" fill="#ce9178"/><rect x="1779.83" y="120.54" width="0.95" height="1.8" fill="#ce9178"/><rect x="1781.12" y="121.34" width="0.95" height="1.0" fill="#d4d4d4"/><rect x="1757.97" y="123.11" width="0.95" height="1.8" fill="#9cdcfe"/><rect x="1759.26" y="123.11" width="0.95" height="1.8" fill="#9cdcfe"/><rect x="1760.54" y="123.11" width="0.95" height="1.8" fill="#9cdcfe"/><rect x="1761.83" y="123.11" width="0.95" height="1.8" fill="#9cdcfe"/><rect x="1763.12" y="123.11" width="0.95" height="1.8" fill="#9cdcfe"/><rect x="1764.40" y="123.11" width="0.95" height="1.8" fill="#9cdcfe"/><rect x="1765.69" y="123.11" width="0.95" height="1.8" fill="#9cdcfe"/><rect x="1766.97" y="123.11" width="0.95" height="1.8" fill="#9cdcfe"/><rect x="1768.26" y="123.11" width="0.95" height="1.0" fill="#d4d4d4"/><rect x="1770.83" y="123.11" width="0.95" height="1.8" fill="#ce9178"/><rect x="1772.12" y="123.11" width="0.95" height="1.8" fill="#ce9178"/><rect x="1773.40" y="123.11" width="0.95" height="1.8" fill="#ce9178"/><rect x="1774.69" y="123.11" width="0.95" height="1.8" fill="#ce9178"/><rect x="1775.98" y="123.11" width="0.95" height="1.8" fill="#ce9178"/><rect x="1777.26" y="123.11" width="0.95" height="1.8" fill="#ce9178"/><rect x="1778.55" y="123.11" width="0.95" height="1.8" fill="#ce9178"/><rect x="1781.12" y="123.11" width="0.95" height="1.8" fill="#ce9178"/><rect x="1782.41" y="123.11" width="0.95" height="1.8" fill="#ce9178"/><rect x="1783.69" y="123.11" width="0.95" height="1.8" fill="#ce9178"/><rect x="1784.98" y="123.11" width="0.95" height="1.8" fill="#ce9178"/><rect x="1786.26" y="123.11" width="0.95" height="1.8" fill="#ce9178"/><rect x="1787.55" y="123.11" width="0.95" height="1.8" fill="#ce9178"/><rect x="1788.84" y="123.11" width="0.95" height="1.8" fill="#ce9178"/><rect x="1790.12" y="123.11" width="0.95" height="1.8" fill="#ce9178"/><rect x="1791.41" y="123.11" width="0.95" height="1.8" fill="#ce9178"/><rect x="1792.69" y="123.11" width="0.95" height="1.8" fill="#ce9178"/><rect x="1793.98" y="123.11" width="0.95" height="1.8" fill="#ce9178"/><rect x="1795.27" y="123.11" width="0.95" height="1.8" fill="#ce9178"/><rect x="1796.55" y="123.91" width="0.95" height="1.0" fill="#d4d4d4"/><rect x="1757.97" y="125.68" width="0.95" height="1.8" fill="#9cdcfe"/><rect x="1759.26" y="125.68" width="0.95" height="1.8" fill="#9cdcfe"/><rect x="1760.54" y="125.68" width="0.95" height="1.8" fill="#9cdcfe"/><rect x="1761.83" y="125.68" width="0.95" height="1.8" fill="#9cdcfe"/><rect x="1763.12" y="125.68" width="0.95" height="1.8" fill="#9cdcfe"/><rect x="1764.40" y="125.68" width="0.95" height="1.8" fill="#9cdcfe"/><rect x="1765.69" y="125.68" width="0.95" height="1.8" fill="#9cdcfe"/><rect x="1766.97" y="125.68" width="0.95" height="1.0" fill="#d4d4d4"/><rect x="1769.55" y="125.68" width="0.95" height="1.8" fill="#ce9178"/><rect x="1770.83" y="125.68" width="0.95" height="1.8" fill="#ce9178"/><rect x="1772.12" y="125.68" width="0.95" height="1.8" fill="#ce9178"/><rect x="1773.40" y="125.68" width="0.95" height="1.8" fill="#ce9178"/><rect x="1774.69" y="125.68" width="0.95" height="1.8" fill="#ce9178"/><rect x="1775.98" y="125.68" width="0.95" height="1.8" fill="#ce9178"/><rect x="1777.26" y="125.68" width="0.95" height="1.8" fill="#ce9178"/><rect x="1778.55" y="125.68" width="0.95" height="1.8" fill="#ce9178"/><rect x="1779.83" y="125.68" width="0.95" height="1.8" fill="#ce9178"/><rect x="1781.12" y="125.68" width="0.95" height="1.8" fill="#ce9178"/><rect x="1782.41" y="125.68" width="0.95" height="1.8" fill="#ce9178"/><rect x="1783.69" y="125.68" width="0.95" height="1.8" fill="#ce9178"/><rect x="1784.98" y="125.68" width="0.95" height="1.8" fill="#ce9178"/><rect x="1786.26" y="125.68" width="0.95" height="1.8" fill="#ce9178"/><rect x="1787.55" y="125.68" width="0.95" height="1.8" fill="#ce9178"/><rect x="1788.84" y="126.48" width="0.95" height="1.0" fill="#ce9178"/><rect x="1790.12" y="125.68" width="0.95" height="1.8" fill="#ce9178"/><rect x="1791.41" y="125.68" width="0.95" height="1.8" fill="#ce9178"/><rect x="1792.69" y="125.68" width="0.95" height="1.8" fill="#ce9178"/><rect x="1793.98" y="125.68" width="0.95" height="1.8" fill="#ce9178"/><rect x="1795.27" y="126.48" width="0.95" height="1.0" fill="#d4d4d4"/><rect x="1757.97" y="128.25" width="0.95" height="1.8" fill="#9cdcfe"/><rect x="1759.26" y="128.25" width="0.95" height="1.8" fill="#9cdcfe"/><rect x="1760.54" y="128.25" width="0.95" height="1.8" fill="#9cdcfe"/><rect x="1761.83" y="128.25" width="0.95" height="1.8" fill="#9cdcfe"/><rect x="1763.12" y="128.25" width="0.95" height="1.8" fill="#9cdcfe"/><rect x="1764.40" y="128.25" width="0.95" height="1.8" fill="#9cdcfe"/><rect x="1765.69" y="128.25" width="0.95" height="1.8" fill="#9cdcfe"/><rect x="1766.97" y="128.25" width="0.95" height="1.8" fill="#9cdcfe"/><rect x="1768.26" y="128.25" width="0.95" height="1.8" fill="#9cdcfe"/><rect x="1769.55" y="128.25" width="0.95" height="1.0" fill="#d4d4d4"/><rect x="1772.12" y="128.25" width="0.95" height="1.8" fill="#569cd6"/><rect x="1773.40" y="128.25" width="0.95" height="1.8" fill="#569cd6"/><rect x="1774.69" y="128.25" width="0.95" height="1.8" fill="#569cd6"/><rect x="1775.98" y="128.25" width="0.95" height="1.8" fill="#569cd6"/><rect x="1777.26" y="128.25" width="0.95" height="1.8" fill="#569cd6"/><rect x="1778.55" y="129.05" width="0.95" height="1.0" fill="#d4d4d4"/><rect x="1757.97" y="130.82" width="0.95" height="1.8" fill="#9cdcfe"/><rect x="1759.26" y="130.82" width="0.95" height="1.8" fill="#9cdcfe"/><rect x="1760.54" y="130.82" width="0.95" height="1.8" fill="#9cdcfe"/><rect x="1761.83" y="130.82" width="0.95" height="1.8" fill="#9cdcfe"/><rect x="1763.12" y="130.82" width="0.95" height="1.8" fill="#9cdcfe"/><rect x="1764.40" y="130.82" width="0.95" height="1.8" fill="#9cdcfe"/><rect x="1765.69" y="130.82" width="0.95" height="1.8" fill="#9cdcfe"/><rect x="1766.97" y="130.82" width="0.95" height="1.8" fill="#9cdcfe"/><rect x="1768.26" y="130.82" width="0.95" height="1.8" fill="#9cdcfe"/><rect x="1769.55" y="130.82" width="0.95" height="1.0" fill="#d4d4d4"/><rect x="1772.12" y="130.82" width="0.95" height="1.8" fill="#d4d4d4"/><rect x="1760.54" y="133.39" width="0.95" height="1.8" fill="#9cdcfe"/><rect x="1761.83" y="133.39" width="0.95" height="1.8" fill="#9cdcfe"/><rect x="1763.12" y="133.39" width="0.95" height="1.8" fill="#9cdcfe"/><rect x="1764.40" y="133.39" width="0.95" height="1.8" fill="#9cdcfe"/><rect x="1765.69" y="133.39" width="0.95" height="1.8" fill="#9cdcfe"/><rect x="1766.97" y="133.39" width="0.95" height="1.8" fill="#9cdcfe"/><rect x="1768.26" y="133.39" width="0.95" height="1.8" fill="#9cdcfe"/><rect x="1769.55" y="133.39" width="0.95" height="1.0" fill="#d4d4d4"/><rect x="1772.12" y="133.39" width="0.95" height="1.8" fill="#ce9178"/><rect x="1773.40" y="133.39" width="0.95" height="1.8" fill="#ce9178"/><rect x="1774.69" y="133.39" width="0.95" height="1.8" fill="#ce9178"/><rect x="1775.98" y="133.39" width="0.95" height="1.8" fill="#ce9178"/><rect x="1777.26" y="133.39" width="0.95" height="1.8" fill="#ce9178"/><rect x="1779.83" y="134.19" width="0.95" height="1.0" fill="#ce9178"/><rect x="1781.12" y="133.39" width="0.95" height="1.8" fill="#ce9178"/><rect x="1782.41" y="133.39" width="0.95" height="1.8" fill="#ce9178"/><rect x="1783.69" y="133.39" width="0.95" height="1.8" fill="#ce9178"/><rect x="1784.98" y="133.39" width="0.95" height="1.8" fill="#ce9178"/><rect x="1786.26" y="133.39" width="0.95" height="1.8" fill="#ce9178"/><rect x="1787.55" y="133.39" width="0.95" height="1.8" fill="#ce9178"/><rect x="1788.84" y="133.39" width="0.95" height="1.8" fill="#ce9178"/><rect x="1790.12" y="133.39" width="0.95" height="1.8" fill="#ce9178"/><rect x="1791.41" y="133.39" width="0.95" height="1.8" fill="#ce9178"/><rect x="1792.69" y="134.19" width="0.95" height="1.0" fill="#d4d4d4"/><rect x="1760.54" y="135.96" width="0.95" height="1.8" fill="#9cdcfe"/><rect x="1761.83" y="135.96" width="0.95" height="1.8" fill="#9cdcfe"/><rect x="1763.12" y="135.96" width="0.95" height="1.8" fill="#9cdcfe"/><rect x="1764.40" y="135.96" width="0.95" height="1.8" fill="#9cdcfe"/><rect x="1765.69" y="135.96" width="0.95" height="1.8" fill="#9cdcfe"/><rect x="1766.97" y="135.96" width="0.95" height="1.8" fill="#9cdcfe"/><rect x="1768.26" y="135.96" width="0.95" height="1.8" fill="#9cdcfe"/><rect x="1769.55" y="135.96" width="0.95" height="1.0" fill="#d4d4d4"/><rect x="1772.12" y="135.96" width="0.95" height="1.8" fill="#ce9178"/><rect x="1773.40" y="135.96" width="0.95" height="1.8" fill="#ce9178"/><rect x="1774.69" y="135.96" width="0.95" height="1.8" fill="#ce9178"/><rect x="1775.98" y="135.96" width="0.95" height="1.8" fill="#ce9178"/><rect x="1777.26" y="135.96" width="0.95" height="1.8" fill="#ce9178"/><rect x="1779.83" y="135.96" width="0.95" height="1.8" fill="#ce9178"/><rect x="1781.12" y="135.96" width="0.95" height="1.8" fill="#ce9178"/><rect x="1782.41" y="135.96" width="0.95" height="1.8" fill="#ce9178"/><rect x="1783.69" y="135.96" width="0.95" height="1.8" fill="#ce9178"/><rect x="1784.98" y="135.96" width="0.95" height="1.8" fill="#ce9178"/><rect x="1786.26" y="135.96" width="0.95" height="1.8" fill="#ce9178"/><rect x="1787.55" y="135.96" width="0.95" height="1.8" fill="#ce9178"/><rect x="1788.84" y="135.96" width="0.95" height="1.8" fill="#ce9178"/><rect x="1790.12" y="135.96" width="0.95" height="1.8" fill="#ce9178"/><rect x="1792.69" y="136.76" width="0.95" height="1.0" fill="#ce9178"/><rect x="1793.98" y="135.96" width="0.95" height="1.8" fill="#ce9178"/><rect x="1795.27" y="135.96" width="0.95" height="1.8" fill="#ce9178"/><rect x="1796.55" y="135.96" width="0.95" height="1.8" fill="#ce9178"/><rect x="1797.84" y="135.96" width="0.95" height="1.8" fill="#ce9178"/><rect x="1799.12" y="135.96" width="0.95" height="1.8" fill="#ce9178"/><rect x="1800.41" y="135.96" width="0.95" height="1.8" fill="#ce9178"/><rect x="1801.70" y="135.96" width="0.95" height="1.8" fill="#ce9178"/><rect x="1802.98" y="135.96" width="0.95" height="1.8" fill="#ce9178"/><rect x="1804.27" y="135.96" width="0.95" height="1.8" fill="#ce9178"/><rect x="1757.97" y="138.53" width="0.95" height="1.8" fill="#d4d4d4"/><rect x="1759.26" y="139.33" width="0.95" height="1.0" fill="#d4d4d4"/><rect x="1757.97" y="141.10" width="0.95" height="1.8" fill="#9cdcfe"/><rect x="1759.26" y="141.10" width="0.95" height="1.8" fill="#9cdcfe"/><rect x="1760.54" y="141.10" width="0.95" height="1.8" fill="#9cdcfe"/><rect x="1761.83" y="141.10" width="0.95" height="1.8" fill="#9cdcfe"/><rect x="1763.12" y="141.10" width="0.95" height="1.8" fill="#9cdcfe"/><rect x="1764.40" y="141.10" width="0.95" height="1.8" fill="#9cdcfe"/><rect x="1765.69" y="141.10" width="0.95" height="1.8" fill="#9cdcfe"/><rect x="1766.97" y="141.10" width="0.95" height="1.8" fill="#9cdcfe"/><rect x="1768.26" y="141.10" width="0.95" height="1.8" fill="#9cdcfe"/><rect x="1769.55" y="141.10" width="0.95" height="1.8" fill="#9cdcfe"/><rect x="1770.83" y="141.10" width="0.95" height="1.8" fill="#9cdcfe"/><rect x="1772.12" y="141.10" width="0.95" height="1.8" fill="#9cdcfe"/><rect x="1773.40" y="141.10" width="0.95" height="1.8" fill="#9cdcfe"/><rect x="1774.69" y="141.10" width="0.95" height="1.8" fill="#9cdcfe"/><rect x="1775.98" y="141.10" width="0.95" height="1.0" fill="#d4d4d4"/><rect x="1778.55" y="141.10" width="0.95" height="1.8" fill="#d4d4d4"/><rect x="1760.54" y="143.67" width="0.95" height="1.8" fill="#9cdcfe"/><rect x="1761.83" y="143.67" width="0.95" height="1.8" fill="#9cdcfe"/><rect x="1763.12" y="143.67" width="0.95" height="1.8" fill="#9cdcfe"/><rect x="1764.40" y="143.67" width="0.95" height="1.8" fill="#9cdcfe"/><rect x="1765.69" y="143.67" width="0.95" height="1.8" fill="#9cdcfe"/><rect x="1766.97" y="143.67" width="0.95" height="1.0" fill="#9cdcfe"/><rect x="1768.26" y="143.67" width="0.95" height="1.8" fill="#9cdcfe"/><rect x="1769.55" y="143.67" width="0.95" height="1.8" fill="#9cdcfe"/><rect x="1770.83" y="143.67" width="0.95" height="1.8" fill="#9cdcfe"/><rect x="1772.12" y="143.67" width="0.95" height="1.8" fill="#9cdcfe"/><rect x="1773.40" y="143.67" width="0.95" height="1.8" fill="#9cdcfe"/><rect x="1774.69" y="143.67" width="0.95" height="1.8" fill="#9cdcfe"/><rect x="1775.98" y="143.67" width="0.95" height="1.8" fill="#9cdcfe"/><rect x="1777.26" y="143.67" width="0.95" height="1.0" fill="#d4d4d4"/><rect x="1779.83" y="143.67" width="0.95" height="1.8" fill="#ce9178"/><rect x="1781.12" y="143.67" width="0.95" height="1.8" fill="#ce9178"/><rect x="1782.41" y="143.67" width="0.95" height="1.8" fill="#ce9178"/><rect x="1783.69" y="144.47" width="0.95" height="1.0" fill="#ce9178"/><rect x="1784.98" y="143.67" width="0.95" height="1.8" fill="#ce9178"/><rect x="1786.26" y="143.67" width="0.95" height="1.8" fill="#ce9178"/><rect x="1787.55" y="144.47" width="0.95" height="1.0" fill="#ce9178"/><rect x="1788.84" y="143.67" width="0.95" height="1.8" fill="#ce9178"/><rect x="1790.12" y="143.67" width="0.95" height="1.8" fill="#ce9178"/><rect x="1791.41" y="144.47" width="0.95" height="1.0" fill="#d4d4d4"/><rect x="1760.54" y="146.24" width="0.95" height="1.8" fill="#9cdcfe"/><rect x="1761.83" y="146.24" width="0.95" height="1.8" fill="#9cdcfe"/><rect x="1763.12" y="146.24" width="0.95" height="1.8" fill="#9cdcfe"/><rect x="1764.40" y="146.24" width="0.95" height="1.8" fill="#9cdcfe"/><rect x="1765.69" y="146.24" width="0.95" height="1.8" fill="#9cdcfe"/><rect x="1766.97" y="146.24" width="0.95" height="1.8" fill="#9cdcfe"/><rect x="1768.26" y="146.24" width="0.95" height="1.8" fill="#9cdcfe"/><rect x="1769.55" y="146.24" width="0.95" height="1.0" fill="#9cdcfe"/><rect x="1770.83" y="146.24" width="0.95" height="1.8" fill="#9cdcfe"/><rect x="1772.12" y="146.24" width="0.95" height="1.8" fill="#9cdcfe"/><rect x="1773.40" y="146.24" width="0.95" height="1.8" fill="#9cdcfe"/><rect x="1774.69" y="146.24" width="0.95" height="1.8" fill="#9cdcfe"/><rect x="1775.98" y="146.24" width="0.95" height="1.8" fill="#9cdcfe"/><rect x="1777.26" y="146.24" width="0.95" height="1.8" fill="#9cdcfe"/><rect x="1778.55" y="146.24" width="0.95" height="1.8" fill="#9cdcfe"/><rect x="1779.83" y="146.24" width="0.95" height="1.0" fill="#d4d4d4"/><rect x="1782.41" y="146.24" width="0.95" height="1.8" fill="#ce9178"/><rect x="1783.69" y="146.24" width="0.95" height="1.8" fill="#ce9178"/><rect x="1784.98" y="146.24" width="0.95" height="1.8" fill="#ce9178"/><rect x="1786.26" y="147.04" width="0.95" height="1.0" fill="#ce9178"/><rect x="1787.55" y="146.24" width="0.95" height="1.8" fill="#ce9178"/><rect x="1788.84" y="147.04" width="0.95" height="1.0" fill="#ce9178"/><rect x="1790.12" y="146.24" width="0.95" height="1.8" fill="#ce9178"/><rect x="1791.41" y="146.24" width="0.95" height="1.8" fill="#ce9178"/><rect x="1792.69" y="147.04" width="0.95" height="1.0" fill="#d4d4d4"/><rect x="1760.54" y="148.81" width="0.95" height="1.8" fill="#9cdcfe"/><rect x="1761.83" y="148.81" width="0.95" height="1.8" fill="#9cdcfe"/><rect x="1763.12" y="148.81" width="0.95" height="1.8" fill="#9cdcfe"/><rect x="1764.40" y="148.81" width="0.95" height="1.8" fill="#9cdcfe"/><rect x="1765.69" y="148.81" width="0.95" height="1.8" fill="#9cdcfe"/><rect x="1766.97" y="148.81" width="0.95" height="1.8" fill="#9cdcfe"/><rect x="1768.26" y="148.81" width="0.95" height="1.8" fill="#9cdcfe"/><rect x="1769.55" y="148.81" width="0.95" height="1.0" fill="#d4d4d4"/><rect x="1772.12" y="148.81" width="0.95" height="1.8" fill="#ce9178"/><rect x="1773.40" y="148.81" width="0.95" height="1.8" fill="#ce9178"/><rect x="1774.69" y="148.81" width="0.95" height="1.8" fill="#ce9178"/><rect x="1775.98" y="149.61" width="0.95" height="1.0" fill="#ce9178"/><rect x="1777.26" y="148.81" width="0.95" height="1.8" fill="#ce9178"/><rect x="1778.55" y="149.61" width="0.95" height="1.0" fill="#ce9178"/><rect x="1779.83" y="148.81" width="0.95" height="1.8" fill="#ce9178"/><rect x="1781.12" y="148.81" width="0.95" height="1.8" fill="#ce9178"/><rect x="1782.41" y="149.61" width="0.95" height="1.0" fill="#d4d4d4"/><rect x="1760.54" y="151.38" width="0.95" height="1.8" fill="#9cdcfe"/><rect x="1761.83" y="151.38" width="0.95" height="1.8" fill="#9cdcfe"/><rect x="1763.12" y="151.38" width="0.95" height="1.8" fill="#9cdcfe"/><rect x="1764.40" y="151.38" width="0.95" height="1.8" fill="#9cdcfe"/><rect x="1765.69" y="151.38" width="0.95" height="1.8" fill="#9cdcfe"/><rect x="1766.97" y="151.38" width="0.95" height="1.8" fill="#9cdcfe"/><rect x="1768.26" y="151.38" width="0.95" height="1.8" fill="#9cdcfe"/><rect x="1769.55" y="151.38" width="0.95" height="1.8" fill="#9cdcfe"/><rect x="1770.83" y="151.38" width="0.95" height="1.8" fill="#9cdcfe"/><rect x="1772.12" y="151.38" width="0.95" height="1.0" fill="#d4d4d4"/><rect x="1774.69" y="151.38" width="0.95" height="1.8" fill="#ce9178"/><rect x="1775.98" y="151.38" width="0.95" height="1.8" fill="#ce9178"/><rect x="1777.26" y="151.38" width="0.95" height="1.8" fill="#ce9178"/><rect x="1778.55" y="152.18" width="0.95" height="1.0" fill="#ce9178"/><rect x="1779.83" y="151.38" width="0.95" height="1.8" fill="#ce9178"/><rect x="1781.12" y="151.38" width="0.95" height="1.8" fill="#ce9178"/><rect x="1782.41" y="152.18" width="0.95" height="1.0" fill="#ce9178"/><rect x="1783.69" y="151.38" width="0.95" height="1.8" fill="#ce9178"/><rect x="1784.98" y="151.38" width="0.95" height="1.8" fill="#ce9178"/><rect x="1786.26" y="152.18" width="0.95" height="1.0" fill="#d4d4d4"/><rect x="1760.54" y="153.95" width="0.95" height="1.8" fill="#9cdcfe"/><rect x="1761.83" y="153.95" width="0.95" height="1.8" fill="#9cdcfe"/><rect x="1763.12" y="153.95" width="0.95" height="1.8" fill="#9cdcfe"/><rect x="1764.40" y="153.95" width="0.95" height="1.8" fill="#9cdcfe"/><rect x="1765.69" y="153.95" width="0.95" height="1.8" fill="#9cdcfe"/><rect x="1766.97" y="153.95" width="0.95" height="1.8" fill="#9cdcfe"/><rect x="1768.26" y="153.95" width="0.95" height="1.8" fill="#9cdcfe"/><rect x="1769.55" y="153.95" width="0.95" height="1.8" fill="#9cdcfe"/><rect x="1770.83" y="153.95" width="0.95" height="1.0" fill="#9cdcfe"/><rect x="1772.12" y="153.95" width="0.95" height="1.8" fill="#9cdcfe"/><rect x="1773.40" y="153.95" width="0.95" height="1.8" fill="#9cdcfe"/><rect x="1774.69" y="153.95" width="0.95" height="1.8" fill="#9cdcfe"/><rect x="1775.98" y="153.95" width="0.95" height="1.8" fill="#9cdcfe"/><rect x="1777.26" y="153.95" width="0.95" height="1.8" fill="#9cdcfe"/><rect x="1778.55" y="153.95" width="0.95" height="1.8" fill="#9cdcfe"/><rect x="1779.83" y="153.95" width="0.95" height="1.8" fill="#9cdcfe"/><rect x="1781.12" y="153.95" width="0.95" height="1.8" fill="#9cdcfe"/><rect x="1782.41" y="153.95" width="0.95" height="1.0" fill="#d4d4d4"/><rect x="1784.98" y="153.95" width="0.95" height="1.8" fill="#ce9178"/><rect x="1786.26" y="153.95" width="0.95" height="1.8" fill="#ce9178"/><rect x="1787.55" y="153.95" width="0.95" height="1.8" fill="#ce9178"/><rect x="1788.84" y="154.75" width="0.95" height="1.0" fill="#ce9178"/><rect x="1790.12" y="153.95" width="0.95" height="1.8" fill="#ce9178"/><rect x="1791.41" y="153.95" width="0.95" height="1.8" fill="#ce9178"/><rect x="1792.69" y="154.75" width="0.95" height="1.0" fill="#ce9178"/><rect x="1793.98" y="153.95" width="0.95" height="1.8" fill="#ce9178"/><rect x="1795.27" y="153.95" width="0.95" height="1.8" fill="#ce9178"/><rect x="1796.55" y="154.75" width="0.95" height="1.0" fill="#d4d4d4"/><rect x="1760.54" y="156.52" width="0.95" height="1.8" fill="#9cdcfe"/><rect x="1761.83" y="156.52" width="0.95" height="1.8" fill="#9cdcfe"/><rect x="1763.12" y="156.52" width="0.95" height="1.8" fill="#9cdcfe"/><rect x="1764.40" y="156.52" width="0.95" height="1.8" fill="#9cdcfe"/><rect x="1765.69" y="156.52" width="0.95" height="1.8" fill="#9cdcfe"/><rect x="1766.97" y="156.52" width="0.95" height="1.0" fill="#d4d4d4"/><rect x="1769.55" y="156.52" width="0.95" height="1.8" fill="#ce9178"/><rect x="1770.83" y="156.52" width="0.95" height="1.8" fill="#ce9178"/><rect x="1772.12" y="156.52" width="0.95" height="1.8" fill="#ce9178"/><rect x="1773.40" y="157.32" width="0.95" height="1.0" fill="#ce9178"/><rect x="1774.69" y="156.52" width="0.95" height="1.8" fill="#ce9178"/><rect x="1775.98" y="157.32" width="0.95" height="1.0" fill="#ce9178"/><rect x="1777.26" y="156.52" width="0.95" height="1.8" fill="#ce9178"/><rect x="1778.55" y="156.52" width="0.95" height="1.8" fill="#ce9178"/><rect x="1779.83" y="157.32" width="0.95" height="1.0" fill="#d4d4d4"/><rect x="1760.54" y="159.09" width="0.95" height="1.8" fill="#9cdcfe"/><rect x="1761.83" y="159.09" width="0.95" height="1.8" fill="#9cdcfe"/><rect x="1763.12" y="159.09" width="0.95" height="1.8" fill="#9cdcfe"/><rect x="1764.40" y="159.09" width="0.95" height="1.8" fill="#9cdcfe"/><rect x="1765.69" y="159.09" width="0.95" height="1.8" fill="#9cdcfe"/><rect x="1766.97" y="159.09" width="0.95" height="1.8" fill="#9cdcfe"/><rect x="1768.26" y="159.09" width="0.95" height="1.8" fill="#9cdcfe"/><rect x="1769.55" y="159.09" width="0.95" height="1.8" fill="#9cdcfe"/><rect x="1770.83" y="159.09" width="0.95" height="1.0" fill="#d4d4d4"/><rect x="1773.40" y="159.09" width="0.95" height="1.8" fill="#ce9178"/><rect x="1774.69" y="159.09" width="0.95" height="1.8" fill="#ce9178"/><rect x="1775.98" y="159.09" width="0.95" height="1.8" fill="#ce9178"/><rect x="1777.26" y="159.89" width="0.95" height="1.0" fill="#ce9178"/><rect x="1778.55" y="159.09" width="0.95" height="1.8" fill="#ce9178"/><rect x="1779.83" y="159.89" width="0.95" height="1.0" fill="#ce9178"/><rect x="1781.12" y="159.09" width="0.95" height="1.8" fill="#ce9178"/><rect x="1782.41" y="159.09" width="0.95" height="1.8" fill="#ce9178"/><rect x="1783.69" y="159.89" width="0.95" height="1.0" fill="#d4d4d4"/><rect x="1760.54" y="161.66" width="0.95" height="1.8" fill="#9cdcfe"/><rect x="1761.83" y="161.66" width="0.95" height="1.8" fill="#9cdcfe"/><rect x="1763.12" y="161.66" width="0.95" height="1.8" fill="#9cdcfe"/><rect x="1764.40" y="161.66" width="0.95" height="1.8" fill="#9cdcfe"/><rect x="1765.69" y="161.66" width="0.95" height="1.8" fill="#9cdcfe"/><rect x="1766.97" y="161.66" width="0.95" height="1.8" fill="#9cdcfe"/><rect x="1768.26" y="161.66" width="0.95" height="1.0" fill="#9cdcfe"/><rect x="1769.55" y="161.66" width="0.95" height="1.8" fill="#9cdcfe"/><rect x="1770.83" y="161.66" width="0.95" height="1.8" fill="#9cdcfe"/><rect x="1772.12" y="161.66" width="0.95" height="1.8" fill="#9cdcfe"/><rect x="1773.40" y="161.66" width="0.95" height="1.8" fill="#9cdcfe"/><rect x="1774.69" y="161.66" width="0.95" height="1.8" fill="#9cdcfe"/><rect x="1775.98" y="161.66" width="0.95" height="1.8" fill="#9cdcfe"/><rect x="1777.26" y="161.66" width="0.95" height="1.8" fill="#9cdcfe"/><rect x="1778.55" y="161.66" width="0.95" height="1.8" fill="#9cdcfe"/><rect x="1779.83" y="161.66" width="0.95" height="1.0" fill="#d4d4d4"/><rect x="1782.41" y="161.66" width="0.95" height="1.8" fill="#ce9178"/><rect x="1783.69" y="161.66" width="0.95" height="1.8" fill="#ce9178"/><rect x="1784.98" y="161.66" width="0.95" height="1.8" fill="#ce9178"/><rect x="1786.26" y="162.46" width="0.95" height="1.0" fill="#ce9178"/><rect x="1787.55" y="161.66" width="0.95" height="1.8" fill="#ce9178"/><rect x="1788.84" y="162.46" width="0.95" height="1.0" fill="#ce9178"/><rect x="1790.12" y="161.66" width="0.95" height="1.8" fill="#ce9178"/><rect x="1791.41" y="161.66" width="0.95" height="1.8" fill="#ce9178"/><rect x="1757.97" y="164.23" width="0.95" height="1.8" fill="#d4d4d4"/><rect x="1759.26" y="165.03" width="0.95" height="1.0" fill="#d4d4d4"/><rect x="1757.97" y="166.80" width="0.95" height="1.8" fill="#9cdcfe"/><rect x="1759.26" y="166.80" width="0.95" height="1.8" fill="#9cdcfe"/><rect x="1760.54" y="166.80" width="0.95" height="1.8" fill="#9cdcfe"/><rect x="1761.83" y="166.80" width="0.95" height="1.8" fill="#9cdcfe"/><rect x="1763.12" y="166.80" width="0.95" height="1.8" fill="#9cdcfe"/><rect x="1764.40" y="166.80" width="0.95" height="1.8" fill="#9cdcfe"/><rect x="1765.69" y="166.80" width="0.95" height="1.8" fill="#9cdcfe"/><rect x="1766.97" y="166.80" width="0.95" height="1.8" fill="#9cdcfe"/><rect x="1768.26" y="166.80" width="0.95" height="1.8" fill="#9cdcfe"/><rect x="1769.55" y="166.80" width="0.95" height="1.8" fill="#9cdcfe"/><rect x="1770.83" y="166.80" width="0.95" height="1.8" fill="#9cdcfe"/><rect x="1772.12" y="166.80" width="0.95" height="1.8" fill="#9cdcfe"/><rect x="1773.40" y="166.80" width="0.95" height="1.8" fill="#9cdcfe"/><rect x="1774.69" y="166.80" width="0.95" height="1.8" fill="#9cdcfe"/><rect x="1775.98" y="166.80" width="0.95" height="1.8" fill="#9cdcfe"/><rect x="1777.26" y="166.80" width="0.95" height="1.8" fill="#9cdcfe"/><rect x="1778.55" y="166.80" width="0.95" height="1.8" fill="#9cdcfe"/><rect x="1779.83" y="166.80" width="0.95" height="1.0" fill="#d4d4d4"/><rect x="1782.41" y="166.80" width="0.95" height="1.8" fill="#d4d4d4"/><rect x="1760.54" y="169.37" width="0.95" height="1.8" fill="#9cdcfe"/><rect x="1761.83" y="169.37" width="0.95" height="1.8" fill="#9cdcfe"/><rect x="1763.12" y="169.37" width="0.95" height="1.8" fill="#9cdcfe"/><rect x="1764.40" y="169.37" width="0.95" height="1.8" fill="#9cdcfe"/><rect x="1765.69" y="169.37" width="0.95" height="1.8" fill="#9cdcfe"/><rect x="1766.97" y="169.37" width="0.95" height="1.8" fill="#9cdcfe"/><rect x="1768.26" y="169.37" width="0.95" height="1.8" fill="#9cdcfe"/><rect x="1769.55" y="169.37" width="0.95" height="1.8" fill="#9cdcfe"/><rect x="1770.83" y="169.37" width="0.95" height="1.8" fill="#9cdcfe"/><rect x="1772.12" y="169.37" width="0.95" height="1.0" fill="#d4d4d4"/><rect x="1774.69" y="169.37" width="0.95" height="1.8" fill="#ce9178"/><rect x="1775.98" y="169.37" width="0.95" height="1.8" fill="#ce9178"/><rect x="1777.26" y="169.37" width="0.95" height="1.8" fill="#ce9178"/><rect x="1778.55" y="170.17" width="0.95" height="1.0" fill="#ce9178"/><rect x="1779.83" y="169.37" width="0.95" height="1.8" fill="#ce9178"/><rect x="1781.12" y="169.37" width="0.95" height="1.8" fill="#ce9178"/><rect x="1782.41" y="170.17" width="0.95" height="1.0" fill="#ce9178"/><rect x="1783.69" y="169.37" width="0.95" height="1.8" fill="#ce9178"/><rect x="1784.98" y="169.37" width="0.95" height="1.8" fill="#ce9178"/><rect x="1757.97" y="171.94" width="0.95" height="1.8" fill="#d4d4d4"/><rect x="1755.40" y="174.51" width="0.95" height="1.8" fill="#d4d4d4"/></svg>
<div class="a" style="left:1910.5px;top:115px;width:1.3px;height:1028px;background:#2b2b2b;"></div>
<div class="a" style="left:1910.5px;top:233px;width:17.5px;height:2.5px;background:#a0a0a0;"></div>
<div class="a" style="left:1910.5px;top:235px;width:6px;height:14.5px;background:#145c99;"></div>
<svg class="a" style="left:88px;top:1146px;width:18px;height:22px" viewBox="0 0 18 22"><g fill="none" stroke="#fff" stroke-width="1.4"><circle cx="5.7" cy="5.2" r="1.8"/><circle cx="5.7" cy="16.4" r="1.8"/><circle cx="13.1" cy="6.6" r="1.8"/><path d="M5.7 7V14.6M13.1 8.4C13.1 12.2 5.7 11.2 5.7 14.6"/></g></svg>
<div class="sb" style="left:108.0px;font-size:16.2px">master*</div>
<svg class="a" style="left:183px;top:1148px;width:16px;height:17px" viewBox="0 0 16 17"><g fill="none" stroke="#fff" stroke-width="2"><path d="M13.5 6.5A6 6 0 0 0 2.5 5.5"/><path d="M2.5 10.5A6 6 0 0 0 13.5 11.5"/></g><path fill="#fff" d="M14.5 1.5V7.5H8.5Z M1.5 15.5V9.5H7.5Z"/></svg>
<div class="sb" style="left:202.0px;font-size:16.2px">0</div>
<div class="sb" style="left:229.5px;font-size:16.2px">2</div>
<svg class="a" style="left:205px;top:1145px;width:50px;height:22px" viewBox="205 1145 50 22"><g fill="none" stroke="#fff" stroke-width="1.7" stroke-linejoin="miter"><path d="M218 1151.5V1162.5M213.3 1157.6L218 1162.3L222.7 1157.6"/><path d="M246 1163V1152M241.3 1156.9L246 1152.2L250.7 1156.9"/></g></svg>
<svg class="a" style="left:268.5px;top:1149.5px;width:16px;height:16px" viewBox="0 0 16 16"><circle cx="8" cy="8" r="7.5" fill="#fff"/><path stroke="#007acc" stroke-width="2" d="M5 5L11 11M11 5L5 11"/></svg>
<div class="sb" style="left:289.0px;font-size:16.2px">0</div>
<svg class="a" style="left:304.5px;top:1149px;width:16px;height:16px" viewBox="0 0 16 16"><path fill="#fff" d="M8 0.5L15.5 15.5H0.5Z"/><path stroke="#007acc" stroke-width="2" d="M8 6V11M8 12.3V14"/></svg>
<div class="sb" style="left:324.0px;font-size:16.2px">0</div>
<div class="sb" style="left:350.0px;font-size:16.2px">Auto Attach: On</div>
<div class="sb" style="left:1499.0px;font-size:16.2px">Ln 9, Col 5</div>
<div class="sb" style="left:1597.5px;font-size:16.2px">Spaces: 2</div>
<div class="sb" style="left:1688.5px;font-size:16.2px">UTF-8</div>
<div class="sb" style="left:1755.0px;font-size:16.2px">LF</div>
<div class="sb" style="left:1792.0px;font-size:16.2px">JSON</div>
<svg class="a" style="left:1845px;top:1143px;width:80px;height:28px" viewBox="1845 1143 80 28"><circle cx="1863.5" cy="1156.9" r="9.1" fill="#fff"/><g fill="#007acc"><ellipse cx="1860.3" cy="1153.4" rx="1.3" ry="1.7"/><ellipse cx="1866.7" cy="1153.4" rx="1.3" ry="1.7"/></g><path fill="none" stroke="#007acc" stroke-width="1.7" d="M1858.2 1158.4Q1863.5 1164.8 1868.8 1158.4"/><path fill="#fff" d="M1900.8 1148.2Q1904.9 1149.4 1905.5 1154.5L1906.3 1158.8L1908.8 1162.3H1892.8L1895.3 1158.8L1896.1 1154.5Q1896.7 1149.4 1900.8 1148.2Z"/><path fill="#fff" d="M1898.8 1163.5H1902.8Q1902.8 1165.6 1900.8 1165.6Q1898.8 1165.6 1898.8 1163.5Z"/></svg>
<svg class="a" style="left:0;top:0;width:2000px;height:1274px" viewBox="0 0 2000 1274"><g fill="#f00000" stroke="#f00000" stroke-width="0.6" stroke-linejoin="round"><path d="M690.8 326 L710 333.8 Q712.3 335 711.5 337 Q710.5 338.2 709 337.9 L705.5 337.2 L719.8 360.8 L698.4 343.1 L698.2 346.5 Q697.5 348.8 695.5 348.5 Q694 348 694 346.5 Z"/><path d="M839.4 327.3 L856.5 330.3 Q858.8 331 858.3 332.5 Q857.6 334 856 333.9 L853 334 L868.8 350.7 L848.8 340 L848.7 342.8 Q848.2 345 846.5 344.8 Q845.2 344.4 845 343 Z"/><path d="M537.7 1019.6 L570 1019.2 Q573 1019 572.8 1015.5 Q572.5 1012.5 569.5 1012.3 L563.5 1011.6 L619 971.5 Q619.5 969.5 617.5 969.8 L556.9 1000.4 L558.6 993.5 Q559 990 555.5 989.8 Q553 989.8 552 992 Z"/></g></svg>
</body></html>
